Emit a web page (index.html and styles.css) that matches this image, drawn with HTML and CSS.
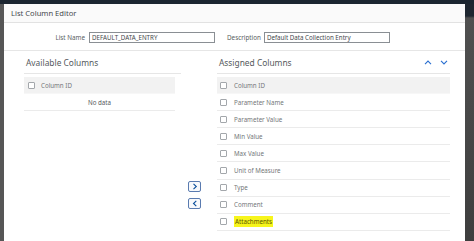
FILE: index.html
```html
<!DOCTYPE html>
<html lang="en">
<head>
    <title>List Column Editor</title>
    <meta charset="UTF-8">
    <link rel="stylesheet" href="styles.css">
</head>
<body>
    <div class="topstrip"></div>
    <div class="stage">
        <div class="leftstrip"></div>
        <div class="dialog" role="dialog" aria-label="List Column Editor">
            <div class="dialog-header">List Column Editor</div>

            <div class="form-row">
                <label class="form-label list-label" for="listName">List Name</label>
                <input class="form-input" id="listName" value="DEFAULT_DATA_ENTRY">
                <label class="form-label desc-label" for="description">Description</label>
                <input class="form-input" id="description" value="Default Data Collection Entry">
            </div>

            <div class="content">
                <div class="panel available">
                    <div class="panel-title">Available Columns</div>
                    <div class="row header-row">
                        <span class="checkbox"></span>
                        <span>Column ID</span>
                    </div>
                    <div class="row empty-row">No data</div>
                </div>

                <div class="move-buttons">
                    <button class="move-btn" aria-label="Add">
                        <svg width="6" height="7" viewBox="0 0 6 7"><path d="M1.5 0.8 L4.3 3.5 L1.5 6.2" fill="none" stroke="#0a4f9c" stroke-width="1.1"/></svg>
                    </button>
                    <button class="move-btn" aria-label="Remove">
                        <svg width="6" height="7" viewBox="0 0 6 7"><path d="M4.3 0.8 L1.5 3.5 L4.3 6.2" fill="none" stroke="#0a4f9c" stroke-width="1.1"/></svg>
                    </button>
                </div>

                <div class="panel assigned">
                    <div class="panel-title">
                        <span>Assigned Columns</span>
                        <span class="sort-icons">
                            <svg width="8" height="5" viewBox="0 0 8 5"><path d="M1 4.2 L4 1 L7 4.2" fill="none" stroke="#2a6fd0" stroke-width="1.1"/></svg>
                            <svg width="8" height="5" viewBox="0 0 8 5"><path d="M1 0.8 L4 4 L7 0.8" fill="none" stroke="#2a6fd0" stroke-width="1.1"/></svg>
                        </span>
                    </div>
                    <div class="row header-row"><span class="checkbox"></span><span>Column ID</span></div>
                    <div class="row"><span class="checkbox"></span><span>Parameter Name</span></div>
                    <div class="row"><span class="checkbox"></span><span>Parameter Value</span></div>
                    <div class="row"><span class="checkbox"></span><span>Min Value</span></div>
                    <div class="row"><span class="checkbox"></span><span>Max Value</span></div>
                    <div class="row"><span class="checkbox"></span><span>Unit of Measure</span></div>
                    <div class="row"><span class="checkbox"></span><span>Type</span></div>
                    <div class="row"><span class="checkbox"></span><span>Comment</span></div>
                    <div class="row"><span class="checkbox"></span><span class="highlight">Attachments</span></div>
                </div>
            </div>
        </div>
        <div class="rightstrip"></div>
    </div>
</body>
</html>
```

FILE: styles.css
```css
body {
    margin: 0;
    padding: 0;
    font-family: "Noto Sans", "Liberation Sans", sans-serif;
    background-color: #4c4c4c;
    height: 241px;
    overflow: hidden;
}

.topstrip {
    height: 4px;
    background-color: #1b2530;
}

.stage {
    display: flex;
    height: 237px;
}

.leftstrip {
    width: 4px;
    background-color: #565656;
}

.rightstrip {
    flex: 1;
    background: linear-gradient(#1e2630 0, #1e2630 12px, #505050 14px, #3e3e3e 100%);
}

.dialog {
    width: 461px;
    background-color: #ffffff;
    color: #32363a;
}

.dialog-header {
    height: 18px;
    line-height: 18px;
    padding-left: 7px;
    font-size: 7.6px;
    color: #45494d;
    background-color: #fafafa;
    border-bottom: 1px solid #e2e2e2;
}

.form-row {
    display: flex;
    align-items: center;
    height: 26px;
    border-bottom: 1px solid #e6e6e6;
    padding-top: 1px;
}

.form-label {
    font-size: 6.3px;
    color: #5a5e62;
    text-align: right;
}

.list-label {
    width: 81px;
    margin-right: 4px;
}

.desc-label {
    margin-left: 12px;
    margin-right: 3px;
}

.form-input {
    box-sizing: border-box;
    width: 126px;
    height: 11px;
    padding: 0 2px;
    border: 1px solid #8a8f94;
    font-family: inherit;
    font-size: 6.2px;
    color: #45494d;
    outline: none;
}

.content {
    display: flex;
    padding-left: 20px;
}

.panel-title {
    display: flex;
    align-items: center;
    justify-content: space-between;
    height: 22px;
    padding: 0 2px;
    font-size: 8.4px;
    color: #55595d;
    border-bottom: 1px solid #e6e6e6;
    margin-bottom: 3px;
}

.available {
    width: 157px;
}

.available .row {
    margin-right: 6px;
}

.assigned {
    width: 233px;
}

.sort-icons {
    display: flex;
    gap: 8px;
}

.row {
    box-sizing: border-box;
    display: flex;
    align-items: center;
    height: 17.1px;
    padding-left: 4px;
    font-size: 6.2px;
    color: #74777a;
    border-bottom: 1px solid #ebebeb;
}

.header-row {
    background-color: #f2f2f2;
    border-bottom: 1px solid #f7f7f7;
}

.empty-row {
    justify-content: center;
    padding-left: 0;
    color: #55595d;
}

.assigned .row {
    padding-left: 3px;
}

.checkbox {
    box-sizing: border-box;
    width: 7px;
    height: 7px;
    border: 1px solid #a3a7ab;
    border-radius: 1px;
    background-color: #ffffff;
    margin-right: 7px;
}

.available .checkbox {
    margin-right: 6px;
}

.highlight {
    background-color: #f7f51c;
    color: #5a5600;
    padding: 1px 1px;
}

.move-buttons {
    display: flex;
    flex-direction: column;
    gap: 6px;
    padding-top: 130px;
    margin: 0 16px 0 7px;
}

.move-btn {
    box-sizing: border-box;
    width: 13px;
    height: 11px;
    padding: 0;
    display: flex;
    align-items: center;
    justify-content: center;
    background-color: #f7f9fc;
    border: 1px solid #5a7bb0;
    border-radius: 2px;
}
```
